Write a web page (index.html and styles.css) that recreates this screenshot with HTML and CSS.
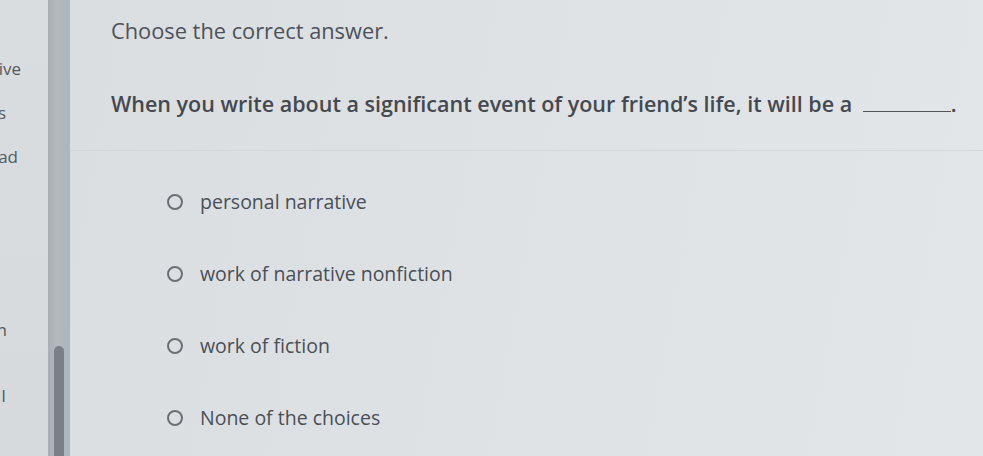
FILE: index.html
```html
<!DOCTYPE html>
<html>
<head>
<meta charset="utf-8">
<link rel="stylesheet" href="styles.css">
</head>
<body>
<div class="page">
  <aside class="side">
    <div class="frag f1"><span>Narrative</span></div>
    <div class="frag f2"><span>Genres</span></div>
    <div class="frag f3"><span>Read</span></div>
    <div class="frag f4"><span>Lesson</span></div>
    <div class="frag f5"><span>Quiz I</span></div>
  </aside>
  <div class="scroll"><div class="thumb"></div></div>
  <main class="main">
    <h1 class="title">Choose the correct answer.</h1>
    <p class="question">When you write about a significant event of your friend’s life, it will be a <span class="blank"></span>.</p>
    <div class="divider"></div>
    <ul class="options">
      <li class="opt"><span class="radio"></span><span>personal narrative</span></li>
      <li class="opt"><span class="radio"></span><span>work of narrative nonfiction</span></li>
      <li class="opt"><span class="radio"></span><span>work of fiction</span></li>
      <li class="opt"><span class="radio"></span><span>None of the choices</span></li>
    </ul>
  </main>
</div>
</body>
</html>
```
FILE: styles.css
```css
html, body {
  margin: 0;
  padding: 0;
  height: 100%;
  overflow: hidden;
}
body {
  font-family: "Open Sans", "Noto Sans", sans-serif;
  color: #4c5157;
  background: #dde1e4;
}
.page {
  display: flex;
  height: 456px;
}
.side {
  width: 48px;
  flex: none;
  background: linear-gradient(180deg, #d9dde0 0%, #d6dadd 100%);
  position: relative;
  overflow: hidden;
  font-size: 17px;
  color: #555a60;
}
.frag {
  position: absolute;
  left: 0;
  height: 22px;
  line-height: 22px;
  display: flex;
  justify-content: flex-end;
  white-space: nowrap;
  overflow: hidden;
}
.f1 { top: 58px; width: 21px; }
.f2 { top: 102px; width: 6px; }
.f3 { top: 146px; width: 18px; }
.f4 { top: 319px; width: 7px; }
.f5 { top: 385px; width: 6px; }
.scroll {
  width: 22px;
  flex: none;
  background: linear-gradient(90deg, #a9aeb4 0%, #b4b9be 40%, #b0b5ba 100%);
  position: relative;
}
.thumb {
  position: absolute;
  left: 6px;
  width: 10px;
  top: 346px;
  bottom: -10px;
  border-radius: 5px;
  background: #7b8086;
}
.main {
  flex: 1;
  padding: 16px 0 0 41px;
  background: linear-gradient(100deg, #dadee1 0%, #dfe3e6 60%, #e3e6e9 100%);
}
.title {
  margin: 0;
  font-size: 21.8px;
  font-weight: 400;
  line-height: 30px;
  color: #4d5258;
}
.question {
  margin: 43px 0 0;
  font-size: 21.5px;
  font-weight: 600;
  line-height: 30px;
  color: #45494f;
  white-space: nowrap;
}
.blank {
  display: inline-block;
  width: 88px;
  border-bottom: 1.5px solid #555;
  margin-left: 5px;
  vertical-align: baseline;
}
.divider {
  margin: 31px 0 0 -41px;
  height: 1px;
  background: #d3d7da;
}
.options {
  list-style: none;
  margin: 37px 0 0 56px;
  padding: 0;
  display: flex;
  flex-direction: column;
  gap: 44px;
}
.opt {
  display: flex;
  align-items: center;
  gap: 17px;
  font-size: 19.5px;
  line-height: 28px;
  color: #4a4f55;
}
.radio {
  width: 12px;
  height: 12px;
  border: 2px solid #6a6f74;
  border-radius: 50%;
  flex: none;
}
```
